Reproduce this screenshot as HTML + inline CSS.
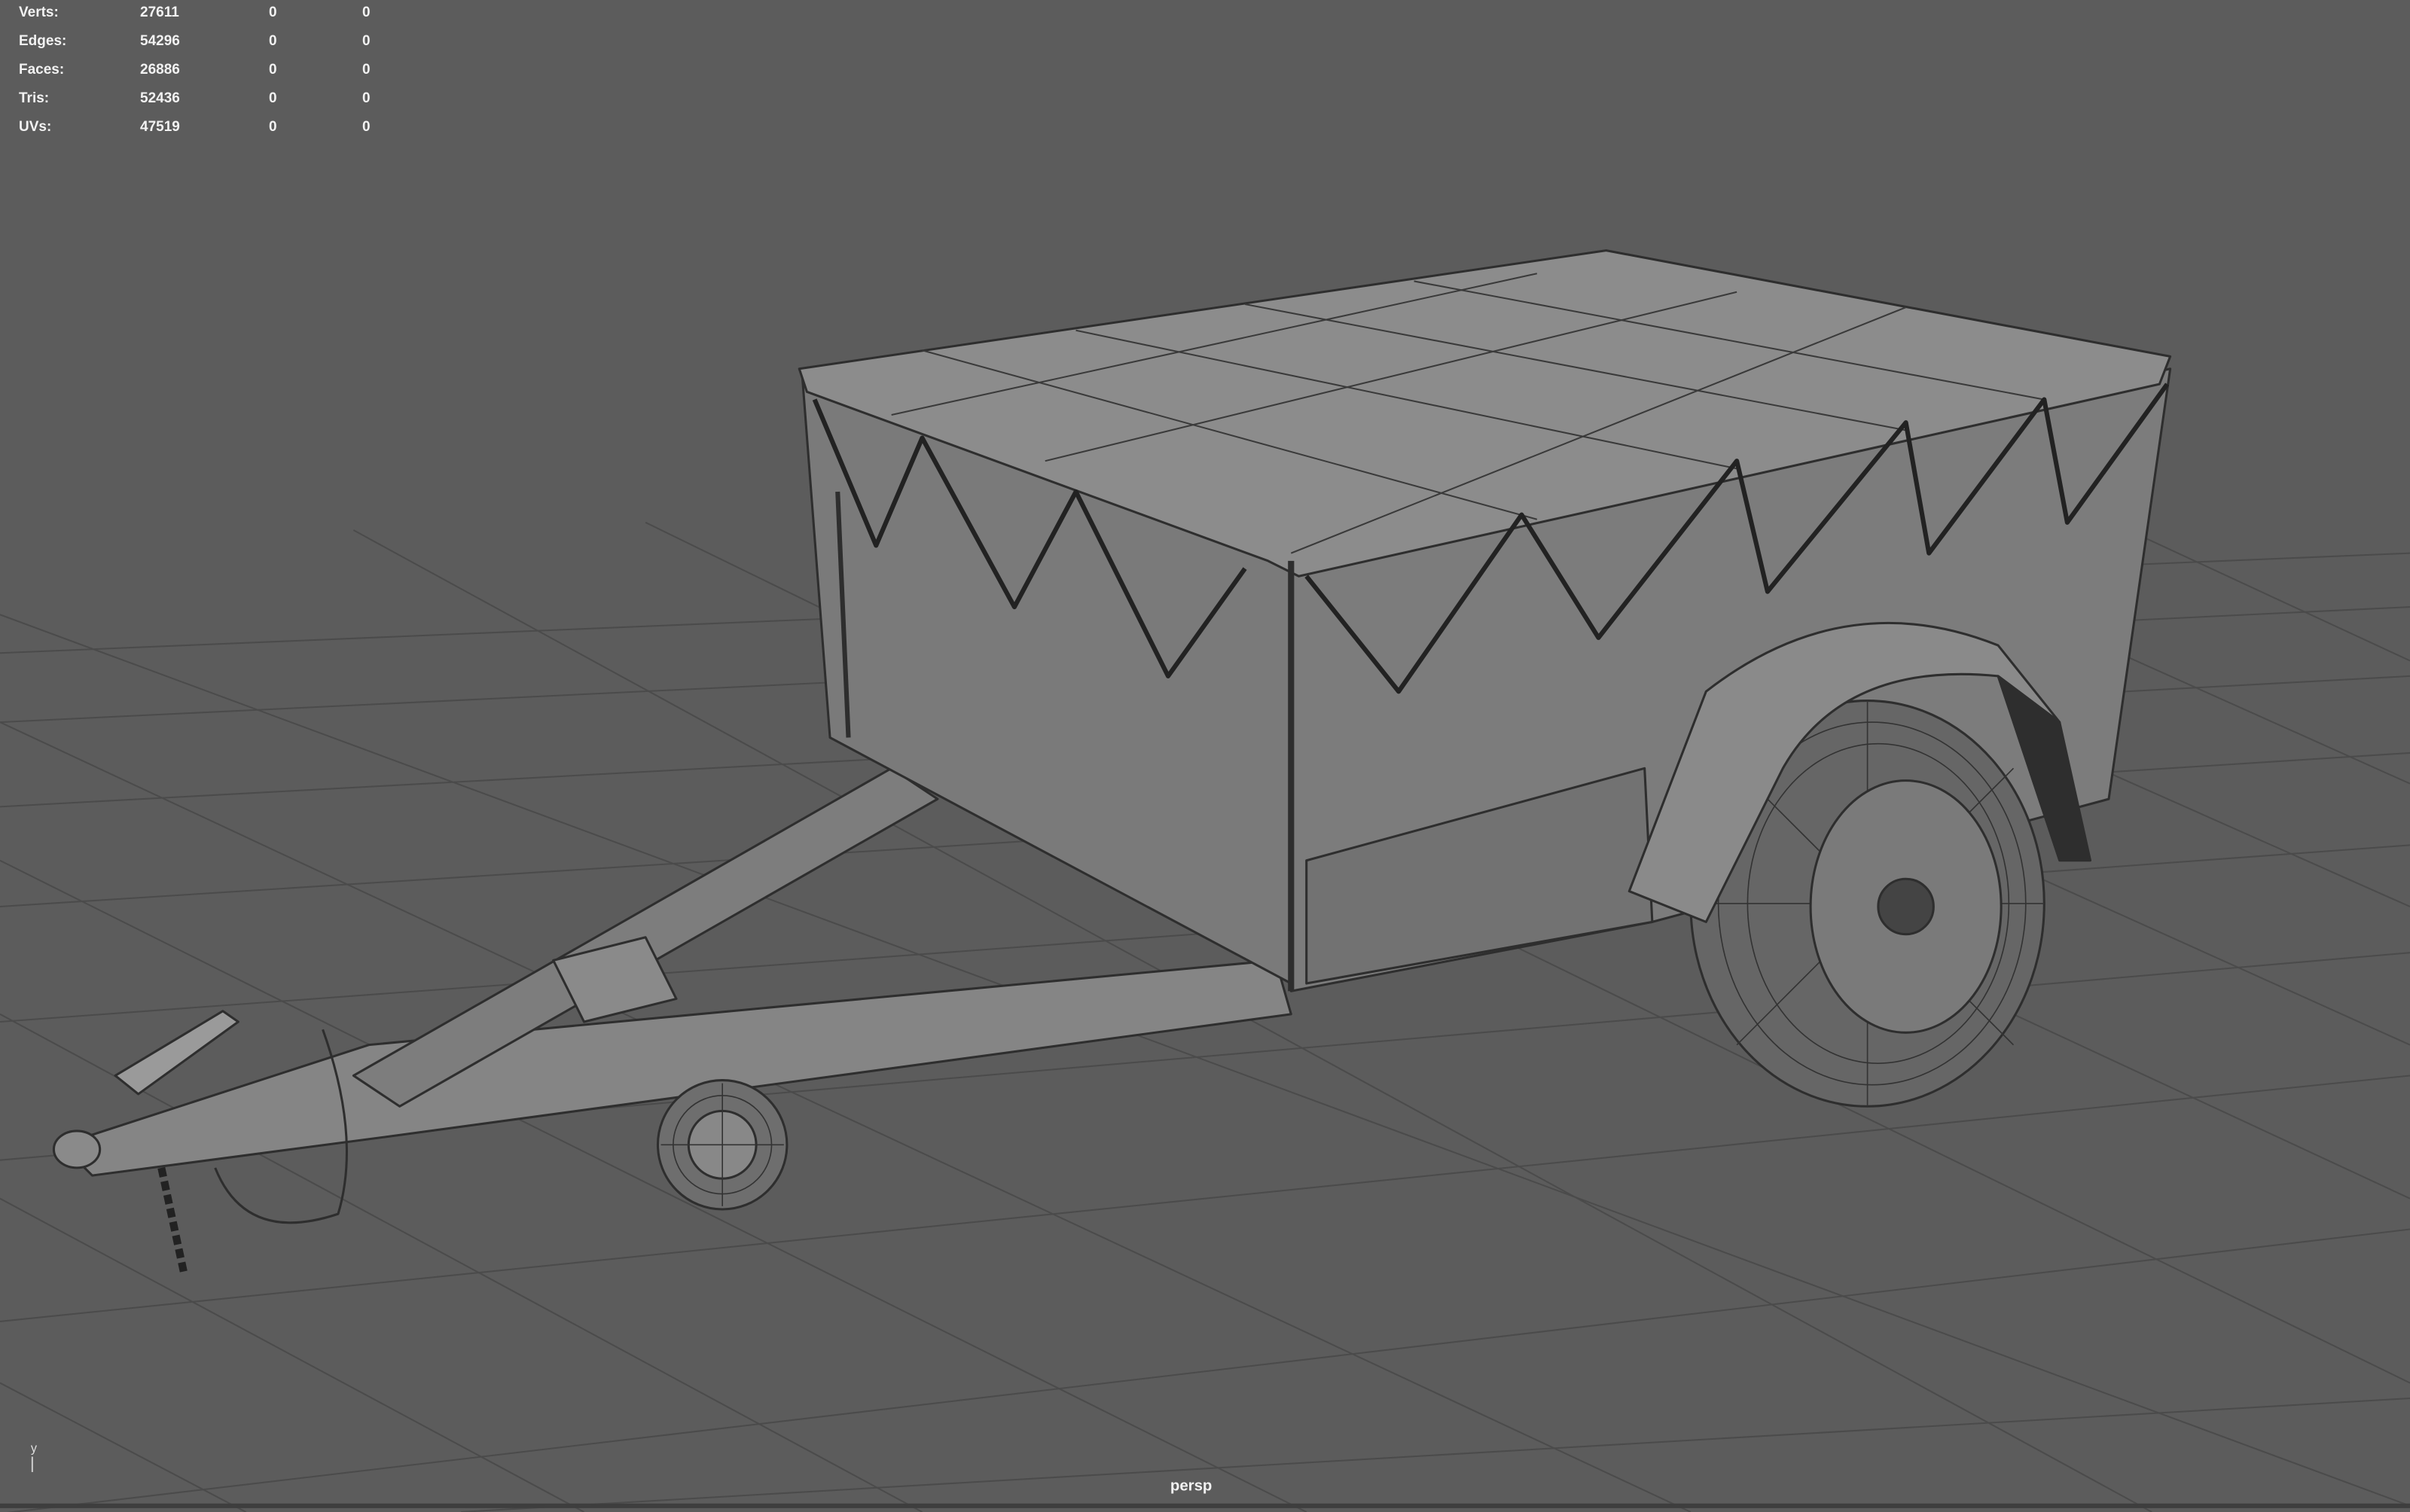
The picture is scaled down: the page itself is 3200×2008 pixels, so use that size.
<!DOCTYPE html>
<html><head><meta charset="utf-8"><style>
html,body{margin:0;padding:0;background:#5c5c5c;}
#w{position:relative;width:3200px;height:2008px;overflow:hidden;background:#5c5c5c;font-family:"Liberation Sans",sans-serif;}
svg{position:absolute;left:0;top:0;}
.t{position:absolute;color:#f2f2f2;font-weight:bold;font-size:19px;}
</style></head><body><div id="w">
<svg width="3200" height="2008" viewBox="0 0 1568 984" preserveAspectRatio="none">
<g stroke="#4b4b4b" stroke-width="1" fill="none">
<line x1="0" y1="425" x2="1568" y2="360"/>
<line x1="0" y1="470" x2="1568" y2="395"/>
<line x1="0" y1="525" x2="1568" y2="440"/>
<line x1="0" y1="590" x2="1568" y2="490"/>
<line x1="0" y1="665" x2="1568" y2="550"/>
<line x1="0" y1="755" x2="1568" y2="620"/>
<line x1="0" y1="860" x2="1568" y2="700"/>
<line x1="0" y1="985" x2="1568" y2="800"/>
<line x1="300" y1="984" x2="1568" y2="910"/>
<line x1="0" y1="400" x2="1568" y2="980"/>
<line x1="420" y1="340" x2="1568" y2="900"/>
<line x1="600" y1="330" x2="1568" y2="780"/>
<line x1="780" y1="325" x2="1568" y2="680"/>
<line x1="960" y1="320" x2="1568" y2="590"/>
<line x1="1140" y1="318" x2="1568" y2="510"/>
<line x1="1320" y1="315" x2="1568" y2="430"/>
<line x1="0" y1="470" x2="1100" y2="984"/>
<line x1="0" y1="560" x2="850" y2="984"/>
<line x1="0" y1="660" x2="600" y2="984"/>
<line x1="0" y1="780" x2="380" y2="984"/>
<line x1="0" y1="900" x2="160" y2="984"/>
<line x1="230" y1="345" x2="1400" y2="984"/>
</g>
<line x1="0" y1="980" x2="1568" y2="980" stroke="#3e3e3e" stroke-width="3"/>
<g stroke="#2e2e2e" stroke-width="1.5" stroke-linejoin="round">
<polygon points="40,745 240,680 830,625 840,660 250,740 60,765" fill="#858585"/>
<polygon points="230,700 580,500 610,520 260,720" fill="#7d7d7d"/>
<polygon points="360,625 420,610 440,650 380,665" fill="#8a8a8a"/>
<circle cx="470" cy="745" r="42" fill="#6e6e6e"/>
<circle cx="470" cy="745" r="22" fill="#888"/>
<g stroke="#333" stroke-width="0.8" fill="none"><circle cx="470" cy="745" r="32"/><line x1="430" y1="745" x2="510" y2="745"/><line x1="470" y1="705" x2="470" y2="785"/></g>
<ellipse cx="50" cy="748" rx="15" ry="12" fill="#8a8a8a"/>
<polygon points="75,700 145,658 155,665 90,712" fill="#9a9a9a"/>
<path d="M105,760 L120,830" stroke="#222" stroke-width="5" fill="none" stroke-dasharray="6,3"/>
<path d="M140,760 Q160,810 220,790 Q235,740 210,670" fill="none"/>
<polygon points="522,245 840,365 840,640 540,480" fill="#7a7a7a"/>
<polygon points="840,365 1412,240 1372,520 1075,600 840,645" fill="#7c7c7c"/>
<polygon points="850,560 1070,500 1075,600 850,640" fill="#727272"/>
<polygon points="520,240 1045,163 1412,232 1405,250 845,375 825,365 525,255" fill="#8c8c8c"/>
<g fill="none" stroke="#3a3a3a" stroke-width="1">
<line x1="600" y1="228" x2="1000" y2="338"/><line x1="700" y1="215" x2="1130" y2="305"/>
<line x1="810" y1="198" x2="1240" y2="280"/><line x1="920" y1="183" x2="1330" y2="260"/>
<line x1="680" y1="300" x2="1130" y2="190"/><line x1="840" y1="360" x2="1240" y2="200"/>
<line x1="580" y1="270" x2="1000" y2="178"/>
</g>
<path d="M530,260 L570,355 L600,285 L660,395 L700,320 L760,440 L810,370" fill="none" stroke="#222" stroke-width="3"/>
<path d="M850,375 L910,450 L990,335 L1040,415 L1130,300 L1150,385 L1240,275 L1255,360 L1330,260 L1345,340 L1410,250" fill="none" stroke="#222" stroke-width="3"/>
<line x1="840" y1="365" x2="840" y2="645" stroke-width="4"/>
<line x1="545" y1="320" x2="552" y2="480" stroke-width="3"/>
<ellipse cx="1215" cy="588" rx="115" ry="132" fill="#666"/>
<g stroke="#333" stroke-width="0.8" fill="none">
<ellipse cx="1218" cy="588" rx="100" ry="118"/><ellipse cx="1222" cy="588" rx="85" ry="104"/>
<line x1="1100" y1="588" x2="1330" y2="588"/><line x1="1215" y1="456" x2="1215" y2="720"/>
<line x1="1130" y1="500" x2="1310" y2="680"/><line x1="1130" y1="680" x2="1310" y2="500"/>
</g>
<ellipse cx="1240" cy="590" rx="62" ry="82" fill="#7a7a7a"/>
<circle cx="1240" cy="590" r="18" fill="#444"/>
<path d="M1060,580 L1110,450 Q1200,380 1300,420 L1340,470 L1300,440 Q1200,430 1160,500 L1110,600 Z" fill="#8a8a8a"/>
<polygon points="1300,440 1340,470 1360,560 1340,560" fill="#2e2e2e"/>
</g>
<text x="775" y="970" fill="#f2f2f2" font-family="Liberation Sans, sans-serif" font-weight="bold" font-size="10" text-anchor="middle">persp</text>
<text x="20" y="945" fill="#ddd" font-family="Liberation Sans, sans-serif" font-size="8">y</text>
<line x1="21" y1="948" x2="21" y2="958" stroke="#ccc" stroke-width="1"/>
</svg>
<div class="t" style="left:25px;top:6px">Verts:</div><div class="t" style="left:186px;top:6px">27611</div><div class="t" style="left:357px;top:6px">0</div><div class="t" style="left:481px;top:6px">0</div>
<div class="t" style="left:25px;top:44px">Edges:</div><div class="t" style="left:186px;top:44px">54296</div><div class="t" style="left:357px;top:44px">0</div><div class="t" style="left:481px;top:44px">0</div>
<div class="t" style="left:25px;top:82px">Faces:</div><div class="t" style="left:186px;top:82px">26886</div><div class="t" style="left:357px;top:82px">0</div><div class="t" style="left:481px;top:82px">0</div>
<div class="t" style="left:25px;top:120px">Tris:</div><div class="t" style="left:186px;top:120px">52436</div><div class="t" style="left:357px;top:120px">0</div><div class="t" style="left:481px;top:120px">0</div>
<div class="t" style="left:25px;top:158px">UVs:</div><div class="t" style="left:186px;top:158px">47519</div><div class="t" style="left:357px;top:158px">0</div><div class="t" style="left:481px;top:158px">0</div>
</div></body></html>
